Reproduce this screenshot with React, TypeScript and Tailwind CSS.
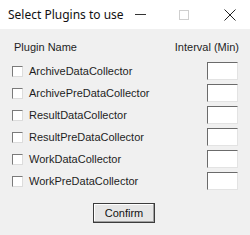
import React from 'react';

const plugins = [
  'ArchiveDataCollector',
  'ArchivePreDataCollector',
  'ResultDataCollector',
  'ResultPreDataCollector',
  'WorkDataCollector',
  'WorkPreDataCollector',
];

const PluginRow = ({ name }: { name: string }) => (
  <div className="flex h-[22px] items-center pl-[12px] pr-[12px]">
    <span className="h-[11px] w-[11px] border border-t-[#7a7a7a] border-l-[#7a7a7a] border-b-[#dcdcdc] border-r-[#dcdcdc] bg-white" />
    <span className="ml-[6px] text-[11px] leading-[13px] text-[#1e1e1e]">{name}</span>
    <span className="ml-auto h-[18px] w-[31px] border border-t-[#6b6b6b] border-l-[#6b6b6b] border-b-[#e3e3e3] border-r-[#e3e3e3] bg-white" />
  </div>
);

export default function App() {
  return (
    <div className="flex h-[235px] w-[250px] flex-col bg-[#f0f0f0] font-['Liberation_Sans',Arial,sans-serif]">
      <div className="flex h-[29px] items-center bg-white">
        <span className="ml-[8px] font-['Noto_Sans',sans-serif] text-[12px] text-[#111]">Select Plugins to use</span>
        <span className="ml-auto mr-[33px] h-px w-[11px] bg-[#333]" />
        <span className="mr-[35px] h-[10px] w-[10px] border border-[#cfcfcf]" />
        <svg width="12" height="12" viewBox="0 0 12 12" className="mr-[14px]">
          <path d="M0.5 0.5 L11.5 11.5 M11.5 0.5 L0.5 11.5" stroke="#222" strokeWidth="1" />
        </svg>
      </div>

      <div className="mt-[12px] flex items-center pl-[14px] pr-[11px] text-[11px] leading-[13px] text-[#1e1e1e]">
        <span>Plugin Name</span>
        <span className="ml-auto">Interval (Min)</span>
      </div>

      <div className="mt-[6px] flex flex-col">
        {plugins.map((p) => (
          <PluginRow key={p} name={p} />
        ))}
      </div>

      <div className="mt-[11px] flex justify-center pr-[2px]">
        <button className="h-[20px] w-[62px] border border-[#3c3c3c] bg-[#e6e6e6] text-[11px] text-[#111] shadow-[inset_-1px_-1px_0_#a0a0a0,inset_1px_1px_0_#ffffff]">
          Confirm
        </button>
      </div>
    </div>
  );
}
